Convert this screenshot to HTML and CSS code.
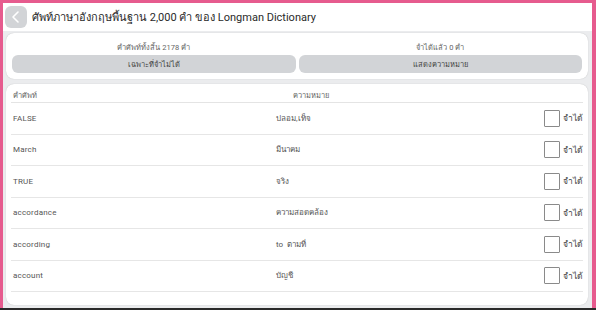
FILE: index.html
```html
<!DOCTYPE html>
<html lang="th">
	<head>
		<meta charset="utf-8">
		<meta name="viewport" content="width=device-width, initial-scale=1">
		<title>ศัพท์ภาษาอังกฤษพื้นฐาน</title>
		<link rel="stylesheet" href="styles.css">
	</head>
	<body>
		<div class="screen">
			<!-- header -->
			<div class="app-header">
				<button class="back-button" title="Back">
					<svg viewBox="0 0 22 22" class="back-icon"><path d="M13 6 L8 11 L13 16"/></svg>
				</button>
				<div class="app-title">ศัพท์ภาษาอังกฤษพื้นฐาน 2,000 คำ ของ Longman Dictionary</div>
			</div>
			<!-- .header -->

			<!-- stats -->
			<div class="card stats-card">
				<div class="stats-col">
					<div class="stats-label">คำศัพท์ทั้งสิ้น 2178 คำ</div>
					<button class="stats-button">เฉพาะที่จำไม่ได้</button>
				</div>
				<div class="stats-col">
					<div class="stats-label">จำได้แล้ว 0 คำ</div>
					<button class="stats-button">แสดงความหมาย</button>
				</div>
			</div>
			<!-- .stats -->

			<!-- word list -->
			<div class="card word-card">
				<div class="word-head">
					<span class="head-word">คำศัพท์</span>
					<span class="head-meaning">ความหมาย</span>
				</div>
				<div class="word-row">
					<span class="word">FALSE</span>
					<span class="meaning">ปลอม,เท็จ</span>
					<label class="remember"><span class="check-box"></span>จำได้</label>
				</div>
				<div class="word-row">
					<span class="word">March</span>
					<span class="meaning">มีนาคม</span>
					<label class="remember"><span class="check-box"></span>จำได้</label>
				</div>
				<div class="word-row">
					<span class="word">TRUE</span>
					<span class="meaning">จริง</span>
					<label class="remember"><span class="check-box"></span>จำได้</label>
				</div>
				<div class="word-row">
					<span class="word">accordance</span>
					<span class="meaning">ความสอดคล้อง</span>
					<label class="remember"><span class="check-box"></span>จำได้</label>
				</div>
				<div class="word-row">
					<span class="word">according</span>
					<span class="meaning">to&nbsp; ตามที่</span>
					<label class="remember"><span class="check-box"></span>จำได้</label>
				</div>
				<div class="word-row">
					<span class="word">account</span>
					<span class="meaning">บัญชี</span>
					<label class="remember"><span class="check-box"></span>จำได้</label>
				</div>
			</div>
			<!-- .word list -->
		</div>
		<div class="bottom-bar"></div>
	</body>
</html>
```

FILE: styles.css
```css
html, body {
	margin: 0;
	padding: 0;
}
body {
	width: 596px;
	height: 310px;
	overflow: hidden;
	background-color: #e65b8e;
	font-family: Roboto, "Noto Sans", sans-serif;
	color: #444;
}
.screen {
	margin: 3px 4px 0 3px;
	height: 305px;
	background-color: #ebecee;
	display: flex;
	flex-direction: column;
}
.bottom-bar {
	height: 2px;
	background-color: #2a2a2a;
}

/* header */
.app-header {
	height: 28px;
	background-color: #fff;
	display: flex;
	align-items: center;
	padding-left: 2px;
	margin-bottom: 2px;
}
.back-button {
	width: 22px;
	height: 22px;
	padding: 0;
	border: 0;
	border-radius: 6px;
	background-color: #d2d4d7;
	display: flex;
	align-items: center;
	justify-content: center;
}
.back-icon {
	width: 22px;
	height: 22px;
	fill: none;
	stroke: #fff;
	stroke-width: 1.6;
	stroke-linecap: round;
	stroke-linejoin: round;
}
.app-title {
	margin-left: 5px;
	font-size: 11px;
	color: #2a2a2a;
}

/* cards */
.card {
	background-color: #fff;
	border-radius: 8px;
	margin: 0 4px 0 3px;
	box-shadow: 0 0 1px rgba(0, 0, 0, 0.25);
}
.stats-card {
	display: flex;
	gap: 3px;
	padding: 8px 6px 6px 6px;
	margin-bottom: 5px;
}
.stats-col {
	flex: 1;
	display: flex;
	flex-direction: column;
	align-items: stretch;
}
.stats-label {
	text-align: center;
	font-size: 7.5px;
	color: #666;
	height: 12px;
	line-height: 13px;
	margin-bottom: 2px;
}
.stats-button {
	height: 18px;
	border: 0;
	border-radius: 6px;
	background-color: #d2d4d7;
	font-family: inherit;
	font-size: 7.5px;
	color: #444;
	padding: 0;
}

.word-card {
	flex: 1;
	padding: 0 5px 0 5px;
	margin-bottom: 3px;
}
.word-head {
	height: 19px;
	display: flex;
	align-items: flex-end;
	border-bottom: 1px solid #e4e4e4;
	font-size: 7.5px;
	color: #666;
	padding: 0 2px 1px 2px;
	box-sizing: border-box;
}
.head-word {
	width: 280px;
}
.word-row {
	height: 31.5px;
	box-sizing: border-box;
	display: flex;
	align-items: center;
	border-bottom: 1px solid #e6e6e6;
	padding: 0 0 0 2px;
	font-size: 8px;
	color: #555;
}
.word {
	width: 263px;
	letter-spacing: 0.2px;
}
.meaning {
	flex: 1;
}
.remember {
	display: flex;
	align-items: center;
	font-size: 8.5px;
	color: #444;
}
.check-box {
	width: 14px;
	height: 15px;
	border: 1px solid #8a8a8a;
	border-radius: 1px;
	margin-right: 3px;
	background-color: #fff;
}
```
